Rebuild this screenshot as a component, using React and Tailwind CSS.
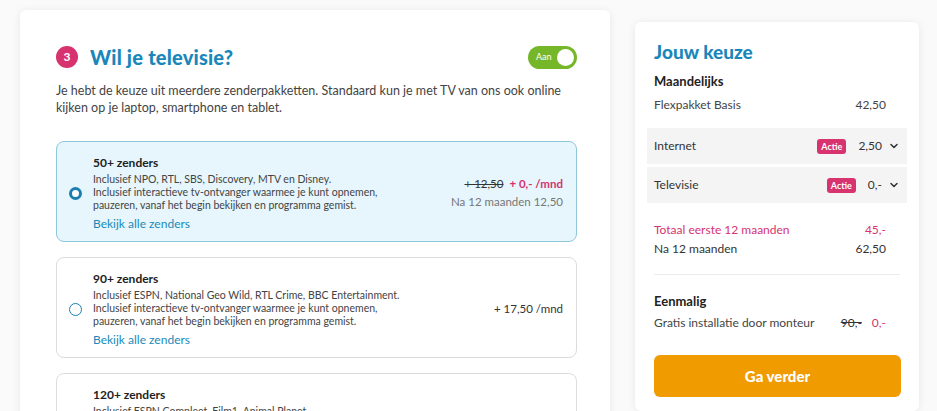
import React from 'react';
import { ChevronDown } from 'lucide-react';

const packages = [
  {
    id: 'p50',
    title: '50+ zenders',
    channels: 'Inclusief NPO, RTL, SBS, Discovery, MTV en Disney.',
    selected: true,
  },
  {
    id: 'p90',
    title: '90+ zenders',
    channels: 'Inclusief ESPN, National Geo Wild, RTL Crime, BBC Entertainment.',
    price: '+ 17,50 /mnd',
  },
  {
    id: 'p120',
    title: '120+ zenders',
    channels: 'Inclusief ESPN Compleet, Film1, Animal Planet.',
    price: '+ 27,50 /mnd',
  },
];

const Radio = ({ checked }) =>
  checked ? (
    <span className="w-[13px] h-[13px] rounded-full border-[3.5px] border-[#1a7fae] bg-white shrink-0" />
  ) : (
    <span className="w-[13px] h-[13px] rounded-full border border-[#1a7fae] bg-white shrink-0" />
  );

const PackageCard = ({ pkg }) => (
  <div
    className={`rounded-lg border pl-[12px] pr-[13px] pt-[12px] pb-[9px] flex items-center gap-[11px] ${
      pkg.selected ? 'bg-[#e6f6fc] border-[#8fc7dc]' : 'bg-white border-[#dcdcdc]'
    }`}
  >
    <Radio checked={pkg.selected} />
    <div className="flex-1">
      <h4 className="text-[12px] font-bold text-[#222] leading-[17px]">{pkg.title}</h4>
      <p className="text-[10.5px] text-[#444] leading-[13px] mt-[2px]">
        {pkg.channels}
        <br />
        Inclusief interactieve tv-ontvanger waarmee je kunt opnemen,
        <br />
        pauzeren, vanaf het begin bekijken en programma gemist.
      </p>
      <a className="block text-[12px] text-[#1a8ab8] leading-[16px] mt-[4px]">Bekijk alle zenders</a>
    </div>
    <div className="text-right self-center">
      {pkg.selected ? (
        <>
          <div className="text-[11.5px] leading-[16px]">
            <span className="line-through text-[#333] mr-[6px]">+ 12,50</span>
            <span className="font-bold text-[#d6336f]">+ 0,- /mnd</span>
          </div>
          <div className="text-[11.5px] leading-[16px] text-[#777] mt-[2px]">Na 12 maanden 12,50</div>
        </>
      ) : (
        <div className="text-[11.5px] leading-[16px] text-[#333]">{pkg.price}</div>
      )}
    </div>
  </div>
);

const ActieRow = ({ label, amount }) => (
  <div className="bg-[#f4f4f5] h-[36px] pl-[7px] pr-[7px] flex items-center text-[12px] text-[#333]">
    <span className="flex-1">{label}</span>
    <span className="bg-[#d6336f] text-white text-[9px] font-bold rounded-[3px] px-[4px] leading-[15px] mr-[12px]">
      Actie
    </span>
    <span>{amount}</span>
    <ChevronDown className="w-3 h-3 ml-[6px] text-[#333]" strokeWidth={3} />
  </div>
);

export default function App() {
  return (
    <div
      className="min-h-[411px] bg-[#fafafa] flex items-start gap-[25px] pl-[20px] overflow-hidden"
      style={{ fontFamily: 'Lato, "Noto Sans", sans-serif' }}
    >
      <div className="w-[590px] mt-[10px] bg-white rounded-md shadow-[0_1px_8px_rgba(0,0,0,0.08)] pl-[36px] pr-[33px] pt-[33px] pb-[30px]">
        <div className="flex items-center h-[28px]">
          <span className="w-[22px] h-[22px] rounded-full bg-[#d6336f] text-white text-[12px] font-bold flex items-center justify-center">
            3
          </span>
          <h2 className="ml-[12px] text-[20px] font-black text-[#1a87ba] tracking-[0.2px]">Wil je televisie?</h2>
          <div className="ml-auto w-[49px] h-[23px] rounded-full bg-[#76b72a] flex items-center pl-[8px] pr-[3px]">
            <span className="text-[9px] text-white flex-1">Aan</span>
            <span className="w-[17px] h-[17px] rounded-full bg-white" />
          </div>
        </div>
        <p className="mt-[11px] text-[12.5px] leading-[17px] text-[#444]">
          Je hebt de keuze uit meerdere zenderpakketten. Standaard kun je met TV van ons ook online kijken op je
          laptop, smartphone en tablet.
        </p>
        <div className="mt-[25px] flex flex-col gap-[15px]">
          {packages.map((pkg) => (
            <PackageCard key={pkg.id} pkg={pkg} />
          ))}
        </div>
      </div>

      <div className="w-[284px] mt-[22px] bg-white rounded-md shadow-[0_1px_8px_rgba(0,0,0,0.08)] px-[12px] pt-[18px] pb-[14px]">
        <h2 className="px-[7px] text-[19px] font-black text-[#1a87ba] leading-[24px]">Jouw keuze</h2>
        <div className="pl-[7px] pr-[21px] mt-[7px]">
          <h3 className="text-[13px] font-bold text-[#222] leading-[20px]">Maandelijks</h3>
          <div className="flex justify-between text-[12px] text-[#444] leading-[18px] mt-[5px]">
            <span>Flexpakket Basis</span>
            <span>42,50</span>
          </div>
        </div>
        <div className="mt-[14px] flex flex-col gap-[3px]">
          <ActieRow label="Internet" amount="2,50" />
          <ActieRow label="Televisie" amount="0,-" />
        </div>
        <div className="pl-[7px] pr-[21px] mt-[17px] text-[12px] leading-[19px]">
          <div className="flex justify-between text-[#d6336f]">
            <span>Totaal eerste 12 maanden</span>
            <span>45,-</span>
          </div>
          <div className="flex justify-between text-[#333]">
            <span>Na 12 maanden</span>
            <span>62,50</span>
          </div>
        </div>
        <div className="mx-[7px] mt-[16px] border-t border-[#ebebeb]" />
        <div className="pl-[7px] pr-[21px] mt-[16px]">
          <h3 className="text-[13px] font-bold text-[#222] leading-[20px]">Eenmalig</h3>
          <div className="flex items-center text-[12px] text-[#444] leading-[18px] mt-[3px]">
            <span className="flex-1">Gratis installatie door monteur</span>
            <span className="line-through text-[#333] mr-[10px]">90,-</span>
            <span className="text-[#d6336f]">0,-</span>
          </div>
        </div>
        <button className="mx-[7px] mt-[23px] w-[247px] h-[42px] rounded-md bg-[#f09b00] text-white text-[15px] font-black">
          Ga verder
        </button>
      </div>
    </div>
  );
}
